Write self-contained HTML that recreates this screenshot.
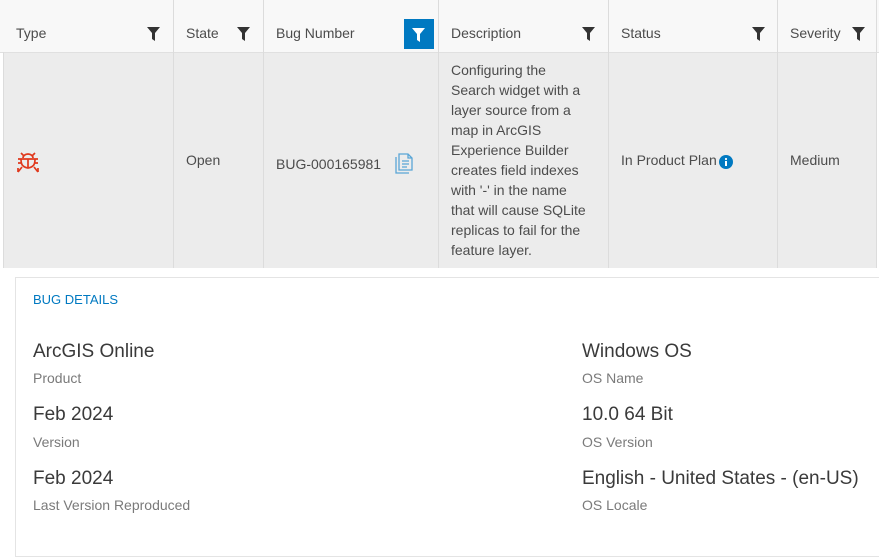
<!DOCTYPE html>
<html><head><style>
body{margin:0;width:879px;height:543px;background:#fff;font-family:"Liberation Sans",sans-serif;color:#4c4c4c;overflow:hidden;position:relative}
.a{position:absolute}
.hdr{position:absolute;left:0;top:0;width:879px;height:52px;background:#f8f8f8;border-bottom:1px solid #e0e0e0}
.row{position:absolute;left:3px;top:53px;width:873px;height:215px;background:#ececec}
.vl{position:absolute;width:1px;background:#dcdcdc;top:0;height:268px}
.h{position:absolute;top:25px;font-size:14px}
.f{position:absolute;top:27px}
.c{position:absolute;font-size:14px}
.lbl{font-size:14px;color:#7a7a7a}
.val{font-size:19px;color:#3a3a3a}
</style></head><body>
<div class="hdr"></div>
<div class="row"></div>
<div class="vl" style="left:3px;top:52px;height:216px"></div>
<div class="vl" style="left:173px"></div>
<div class="vl" style="left:263px"></div>
<div class="vl" style="left:438px"></div>
<div class="vl" style="left:608px"></div>
<div class="vl" style="left:777px"></div>
<div class="vl" style="left:876px"></div>

<div class="h" style="left:16px">Type</div>
<div class="h" style="left:186px">State</div>
<div class="h" style="left:276px">Bug Number</div>
<div class="h" style="left:451px">Description</div>
<div class="h" style="left:621px">Status</div>
<div class="h" style="left:790px">Severity</div>

<svg class="f" style="left:147px" width="13" height="14" viewBox="0 0 13 14"><path d="M0 0H13L8 6V14L5 12V6Z" fill="#333"/></svg>
<svg class="f" style="left:237px" width="13" height="14" viewBox="0 0 13 14"><path d="M0 0H13L8 6V14L5 12V6Z" fill="#333"/></svg>
<div class="a" style="left:404px;top:19px;width:30px;height:30px;background:#0079c1"></div>
<svg class="f" style="left:412px;top:28px" width="13" height="14" viewBox="0 0 13 14"><path d="M0 0H13L8 6V14L5 12V6Z" fill="#fff"/></svg>
<svg class="f" style="left:582px" width="13" height="14" viewBox="0 0 13 14"><path d="M0 0H13L8 6V14L5 12V6Z" fill="#333"/></svg>
<svg class="f" style="left:752px" width="13" height="14" viewBox="0 0 13 14"><path d="M0 0H13L8 6V14L5 12V6Z" fill="#333"/></svg>
<svg class="f" style="left:852px" width="13" height="14" viewBox="0 0 13 14"><path d="M0 0H13L8 6V14L5 12V6Z" fill="#333"/></svg>

<svg class="a" style="left:17px;top:152px" width="22" height="22" viewBox="0 0 22 22" fill="none" stroke="#e0381c" stroke-width="1.7"><path d="M4 1L7 4M18 1L15 4M6 6A5 4 0 0 1 16 6M1 7H21M4 7C4 12 5 15 11 16C17 15 18 12 18 7M11 7V16M1 11H4M21 11H18M1 20L5 15M21 20L17 15M1 16V20M21 16V20"/></svg>
<div class="c" style="left:186px;top:152px">Open</div>
<div class="c" style="left:276px;top:156px">BUG-000165981</div>
<svg class="a" style="left:395px;top:153px" width="18" height="21" viewBox="0 0 18 21" fill="none" stroke="#5aa6d6" stroke-width="1.3"><path d="M4 1H13L17 5V17H4Z M13 1V5H17 M1 4V20H14 M7 8H14M7 11H14M7 14H12"/></svg>
<div class="c" style="left:451px;top:60px;line-height:20px;width:150px">Configuring the<br>Search widget with a<br>layer source from a<br>map in ArcGIS<br>Experience Builder<br>creates field indexes<br>with '-' in the name<br>that will cause SQLite<br>replicas to fail for the<br>feature layer.</div>
<div class="c" style="left:621px;top:152px">In Product Plan</div>
<svg class="a" style="left:719px;top:155px" width="14" height="14" viewBox="0 0 14 14"><circle cx="7" cy="7" r="7" fill="#0079c1"/><rect x="6" y="6" width="2" height="5" fill="#fff"/><circle cx="7" cy="4" r="1.1" fill="#fff"/></svg>
<div class="c" style="left:790px;top:152px">Medium</div>

<div class="a" style="left:15px;top:277px;width:870px;height:280px;border:1px solid #e4e4e4;box-sizing:border-box"></div>
<div class="a" style="left:33px;top:292px;font-size:13px;color:#0079c1">BUG DETAILS</div>

<div class="a val" style="left:33px;top:341px">ArcGIS Online</div>
<div class="a lbl" style="left:33px;top:370px">Product</div>
<div class="a val" style="left:33px;top:404px">Feb 2024</div>
<div class="a lbl" style="left:33px;top:434px">Version</div>
<div class="a val" style="left:33px;top:468px">Feb 2024</div>
<div class="a lbl" style="left:33px;top:497px">Last Version Reproduced</div>

<div class="a val" style="left:582px;top:341px">Windows OS</div>
<div class="a lbl" style="left:582px;top:370px">OS Name</div>
<div class="a val" style="left:582px;top:404px">10.0 64 Bit</div>
<div class="a lbl" style="left:582px;top:434px">OS Version</div>
<div class="a val" style="left:582px;top:468px">English - United States - (en-US)</div>
<div class="a lbl" style="left:582px;top:497px">OS Locale</div>
</body></html>
